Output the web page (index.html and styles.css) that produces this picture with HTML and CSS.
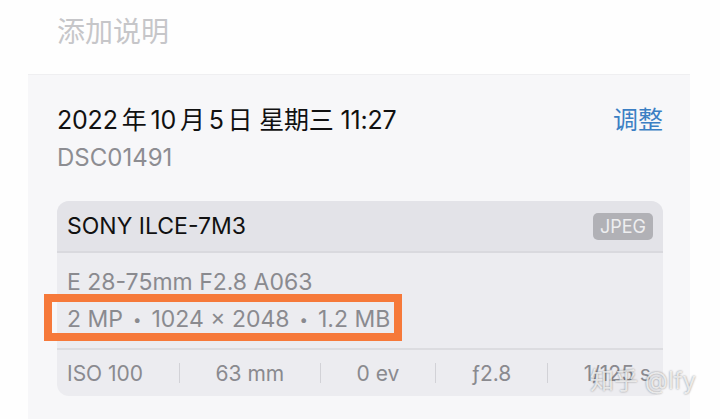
FILE: index.html
```html
<!DOCTYPE html>
<html lang="zh">

<head>
  <meta charset="UTF-8" />
  <meta name="viewport" content="width=device-width, initial-scale=1.0" />
  <title>照片信息</title>
  <link rel="stylesheet" href="styles.css">
</head>

<body>
  <div class="caption">添加说明</div>

  <div class="info-card">
    <div class="date-row">
      <span class="date">2022&#8198;年&#8198;10&#8198;月&#8198;5&#8198;日 星期三 11:27</span>
      <span class="adjust">调整</span>
    </div>
    <div class="file-name">DSC01491</div>

    <div class="exif-wrap">
      <div class="exif">
        <div class="exif-head">
          <span class="camera">SONY ILCE-7M3</span>
          <span class="format-badge">JPEG</span>
        </div>
        <div class="exif-body">
          <div class="lens">E 28-75mm F2.8 A063</div>
          <div class="dims">2 MP<span class="dot">•</span>1024 × 2048<span class="dot">•</span>1.2 MB</div>
        </div>
        <div class="exif-stats">
          <span>ISO 100</span>
          <i class="sep"></i>
          <span>63 mm</span>
          <i class="sep"></i>
          <span>0 ev</span>
          <i class="sep"></i>
          <span>ƒ2.8</span>
          <i class="sep"></i>
          <span>1/125 s</span>
        </div>
      </div>
      <div class="highlight"></div>
    </div>
  </div>

  <div class="watermark">知乎 @lfy</div>
</body>

</html>
```

FILE: styles.css
```css
body {
  margin: 0;
  background: #fefefe;
  font-family: Inter, "Noto Sans CJK SC", sans-serif;
  height: 419px;
  overflow: hidden;
  position: relative;
}

.caption {
  height: 74px;
  box-sizing: border-box;
  padding: 10px 0 0 57px;
  font-size: 28px;
  color: #c6c6c9;
}

.info-card {
  margin: 0 30px 0 28px;
  padding: 20px 27px 30px 29px;
  background: #f7f7f9;
  border-top: 1px solid #efeff1;
}

.date-row {
  display: flex;
  justify-content: space-between;
  align-items: center;
  height: 46px;
}

.date {
  font-size: 25px;
  color: #111;
  letter-spacing: -0.2px;
}

.adjust {
  font-size: 25px;
  color: #3b7fc4;
}

.file-name {
  font-size: 24px;
  color: #8d8d92;
  height: 40px;
  line-height: 34px;
}

.exif-wrap {
  position: relative;
  margin-top: 20px;
}

.exif {
  border-radius: 12px;
  overflow: hidden;
  background: #ececf0;
}

.exif-head {
  display: flex;
  justify-content: space-between;
  align-items: center;
  height: 50px;
  padding: 0 10px;
  background: #e3e3e8;
  border-bottom: 2px solid #d9d9de;
}

.camera {
  font-size: 23px;
  color: #111;
}

.format-badge {
  font-size: 18px;
  color: #eeeef0;
  background: #b1b1b6;
  border-radius: 5px;
  padding: 3px 7px;
}

.exif-body {
  padding: 12px 10px 7px;
  border-bottom: 2px solid #dcdce0;
  font-size: 23px;
  color: #8a8a8f;
}

.lens {
  height: 38px;
  line-height: 34px;
}

.dims {
  height: 38px;
  line-height: 32px;
}

.dot {
  font-size: 15px;
  margin: 0 10px;
  vertical-align: 2px;
}

.exif-stats {
  display: flex;
  justify-content: space-between;
  align-items: center;
  height: 46px;
  padding: 0 12px 0 10px;
  font-size: 21px;
  color: #8a8a8f;
}

.sep {
  width: 1px;
  height: 20px;
  background: #d2d2d7;
}

.highlight {
  position: absolute;
  left: -13px;
  top: 93px;
  width: 342px;
  height: 31px;
  border: 8px solid #f6793a;
}

.watermark {
  position: absolute;
  left: 590px;
  top: 361px;
  font-size: 24px;
  color: rgba(255, 255, 255, 0.75);
  text-shadow: 0 0 2px rgba(0, 0, 0, 0.45);
}
```
